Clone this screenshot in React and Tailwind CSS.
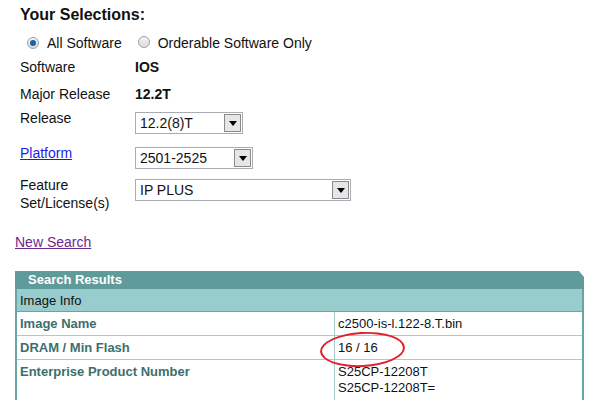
import React from 'react'

const SelectBox = ({ value, width, offset = 'mt-[2px]' }) => (
  <div
    className={`flex items-center h-[22px] border border-[#a9adb3] bg-white ${offset}`}
    style={{ width }}
  >
    <span className="flex-1 pl-[4px] text-[14px] leading-none text-[#111]">{value}</span>
    <span className="flex items-center justify-center w-[17px] h-[18px] mr-[1px] border border-[#8a8a8a] bg-[#e6e6e6]">
      <svg width="8" height="5" viewBox="0 0 8 5">
        <path d="M0 0h8L4 5z" fill="#000" />
      </svg>
    </span>
  </div>
)

const Radio = ({ checked }) => (
  <span className="inline-flex items-center justify-center w-[12px] h-[12px] rounded-full border border-[#a0a0a0] bg-gradient-to-b from-[#f4f4f4] to-[#dcdcdc]">
    {checked && <span className="w-[6px] h-[6px] rounded-full bg-[#1f5fa8]" />}
  </span>
)

const rows = [
  { label: 'Image Name', value: ['c2500-is-l.122-8.T.bin'], h: 'h-[24px]' },
  { label: 'DRAM / Min Flash', value: ['16 / 16'], h: 'h-[24px]' },
  { label: 'Enterprise Product Number', value: ['S25CP-12208T', 'S25CP-12208T='], h: 'h-[48px]' },
]

export default function App() {
  return (
    <div className="w-[600px] h-[400px] overflow-hidden bg-white text-[#111] font-['Liberation_Sans',Arial,sans-serif] relative">
      <div className="pl-[20px] pt-[5px]">
        <h2 className="text-[16px] font-bold leading-[19px]">Your Selections:</h2>

        <div className="flex items-center mt-[11px] ml-[7px] text-[14px] leading-[16px]">
          <Radio checked />
          <span className="ml-[8px]">All Software</span>
          <span className="ml-[16px]"><Radio /></span>
          <span className="ml-[8px]">Orderable Software Only</span>
        </div>

        <div className="grid grid-cols-[115px_1fr] text-[14px] leading-[17px] mt-[8px]">
          <div className="h-[27px]">Software</div>
          <div className="font-bold">IOS</div>

          <div className="h-[23px]">Major Release</div>
          <div className="font-bold">12.2T</div>

          <div className="h-[35px] pt-[1px]">Release</div>
          <div><SelectBox value="12.2(8)T" width={108} offset="mt-[3px]" /></div>

          <div className="h-[32px] pt-[1px]">
            <a className="text-[#1a1aee] underline">Platform</a>
          </div>
          <div><SelectBox value="2501-2525" width={118} offset="mt-[3px]" /></div>

          <div className="leading-[18px]">
            Feature
            <br />
            Set/License(s)
          </div>
          <div><SelectBox value="IP PLUS" width={216} offset="mt-[3px]" /></div>
        </div>
      </div>

      <div className="pl-[15px] mt-[22px] text-[14px] leading-[17px]">
        <a className="text-[#6b2a8e] underline">New Search</a>
      </div>

      <div className="ml-[15px] mt-[20px] w-[569px]">
        <div className="h-[18px] bg-[#5f9b9b] pl-[13px] text-white font-bold text-[13px] leading-[18px] [clip-path:polygon(0_0,calc(100%-5px)_0,100%_6px,100%_100%,0_100%)]">
          Search Results
        </div>
        <div className="border-l-2 border-r-2 border-[#6aa5a5]">
          <div className="h-[23px] bg-[#99cccc] pl-[3px] text-[13px] leading-[23px] border-b border-[#6aa5a5]">
            Image Info
          </div>
          {rows.map((r) => (
            <div key={r.label} className={`grid grid-cols-[318px_1fr] border-b border-[#a7cccc] ${r.h}`}>
              <div className="pl-[3px] pt-[4px] text-[13px] leading-[16px] font-bold text-[#3d6e6e] border-r border-[#a7cccc]">
                {r.label}
              </div>
              <div className="pl-[3px] pt-[4px] text-[13px] leading-[16px] text-[#111]">
                {r.value.map((v) => (
                  <div key={v}>{v}</div>
                ))}
              </div>
            </div>
          ))}
        </div>
      </div>

      <div className="absolute left-[320px] top-[332px] w-[85px] h-[35px] rounded-[50%] border-2 border-[#e0202c] -rotate-3" />
    </div>
  )
}
